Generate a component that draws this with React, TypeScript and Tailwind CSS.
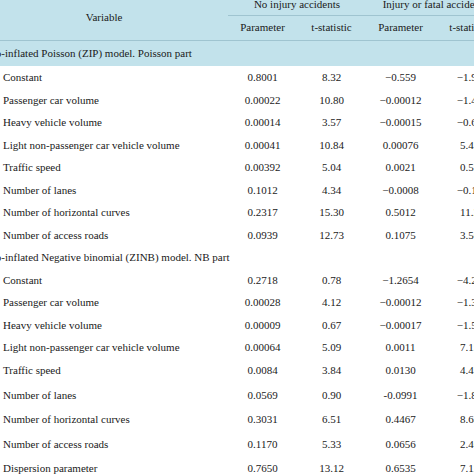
type Row = { label: string; v: [string, string, string, string]; h?: string };

const zip: Row[] = [
  { label: 'Constant', v: ['0.8001', '8.32', '−0.559', '−1.96'] },
  { label: 'Passenger car volume', v: ['0.00022', '10.80', '−0.00012', '−1.45'] },
  { label: 'Heavy vehicle volume', v: ['0.00014', '3.57', '−0.00015', '−0.67'] },
  { label: 'Light non-passenger car vehicle volume', v: ['0.00041', '10.84', '0.00076', '5.42'] },
  { label: 'Traffic speed', v: ['0.00392', '5.04', '0.0021', '0.55'] },
  { label: 'Number of lanes', v: ['0.1012', '4.34', '−0.0008', '−0.12'] },
  { label: 'Number of horizontal curves', v: ['0.2317', '15.30', '0.5012', '11.2'] },
  { label: 'Number of access roads', v: ['0.0939', '12.73', '0.1075', '3.56'] },
];

const zinb: Row[] = [
  { label: 'Constant', v: ['0.2718', '0.78', '−1.2654', '−4.21'] },
  { label: 'Passenger car volume', v: ['0.00028', '4.12', '−0.00012', '−1.38'] },
  { label: 'Heavy vehicle volume', v: ['0.00009', '0.67', '−0.00017', '−1.52'] },
  { label: 'Light non-passenger car vehicle volume', v: ['0.00064', '5.09', '0.0011', '7.15'] },
  { label: 'Traffic speed', v: ['0.0084', '3.84', '0.0130', '4.43'], h: 'h-[24px]' },
  { label: 'Number of lanes', v: ['0.0569', '0.90', '-0.0991', '−1.87'], h: 'h-[24.5px]' },
  { label: 'Number of horizontal curves', v: ['0.3031', '6.51', '0.4467', '8.64'], h: 'h-[24.5px]' },
  { label: 'Number of access roads', v: ['0.1170', '5.33', '0.0656', '2.46'], h: 'h-[24.5px]' },
  { label: 'Dispersion parameter', v: ['0.7650', '13.12', '0.6535', '7.12'], h: 'h-[24.5px]' },
];

const DataRow = ({ row }: { row: Row }) => (
  <tr className={row.h ?? 'h-[22.5px]'}>
    <td className="p-0 pl-[23px] text-left whitespace-nowrap">{row.label}</td>
    {row.v.map((val, i) => (
      <td key={i} className="p-0 text-center whitespace-nowrap">
        {val}
      </td>
    ))}
  </tr>
);

const SectionRow = ({ text, blue }: { text: string; blue?: boolean }) => (
  <tr className={blue ? 'h-[26px] bg-[#c2e2eb]' : 'h-[22.5px]'}>
    <td colSpan={5} className="p-0 pl-[0.5px] text-left whitespace-nowrap">
      {text}
    </td>
  </tr>
);

export default function App() {
  return (
    <div className="w-[474px] h-[474px] overflow-hidden bg-white text-[#1a1a1a] font-['Liberation_Serif','Times_New_Roman',serif] text-[11px]">
      <table className="table-fixed border-collapse w-[524px] -ml-[20px] -mt-[6px]">
        <colgroup>
          <col className="w-[248px]" />
          <col className="w-[69px]" />
          <col className="w-[69px]" />
          <col className="w-[69px]" />
          <col className="w-[69px]" />
        </colgroup>
        <thead className="bg-[#c2e2eb]">
          <tr className="h-[21px]">
            <th rowSpan={2} className="p-0 font-normal text-center border-b border-[#9fc4d0]">
              Variable
            </th>
            <th colSpan={2} className="p-0 font-normal text-center border-b border-[#9fc4d0]">
              No injury accidents
            </th>
            <th colSpan={2} className="p-0 font-normal text-center border-b border-[#9fc4d0]">
              Injury or fatal accidents
            </th>
          </tr>
          <tr className="h-[25px]">
            <th className="p-0 font-normal text-center border-b border-[#9fc4d0]">Parameter</th>
            <th className="p-0 font-normal text-center border-b border-[#9fc4d0]">t-statistic</th>
            <th className="p-0 font-normal text-center border-b border-[#9fc4d0]">Parameter</th>
            <th className="p-0 font-normal text-center border-b border-[#9fc4d0]">t-statistic</th>
          </tr>
        </thead>
        <tbody>
          <SectionRow blue text="Zero-inflated Poisson (ZIP) model. Poisson part" />
          {zip.map((r, i) => (
            <DataRow key={'zip' + i} row={r} />
          ))}
          <SectionRow text="Zero-inflated Negative binomial (ZINB) model. NB part" />
          {zinb.map((r, i) => (
            <DataRow key={'zinb' + i} row={r} />
          ))}
        </tbody>
      </table>
    </div>
  );
}
